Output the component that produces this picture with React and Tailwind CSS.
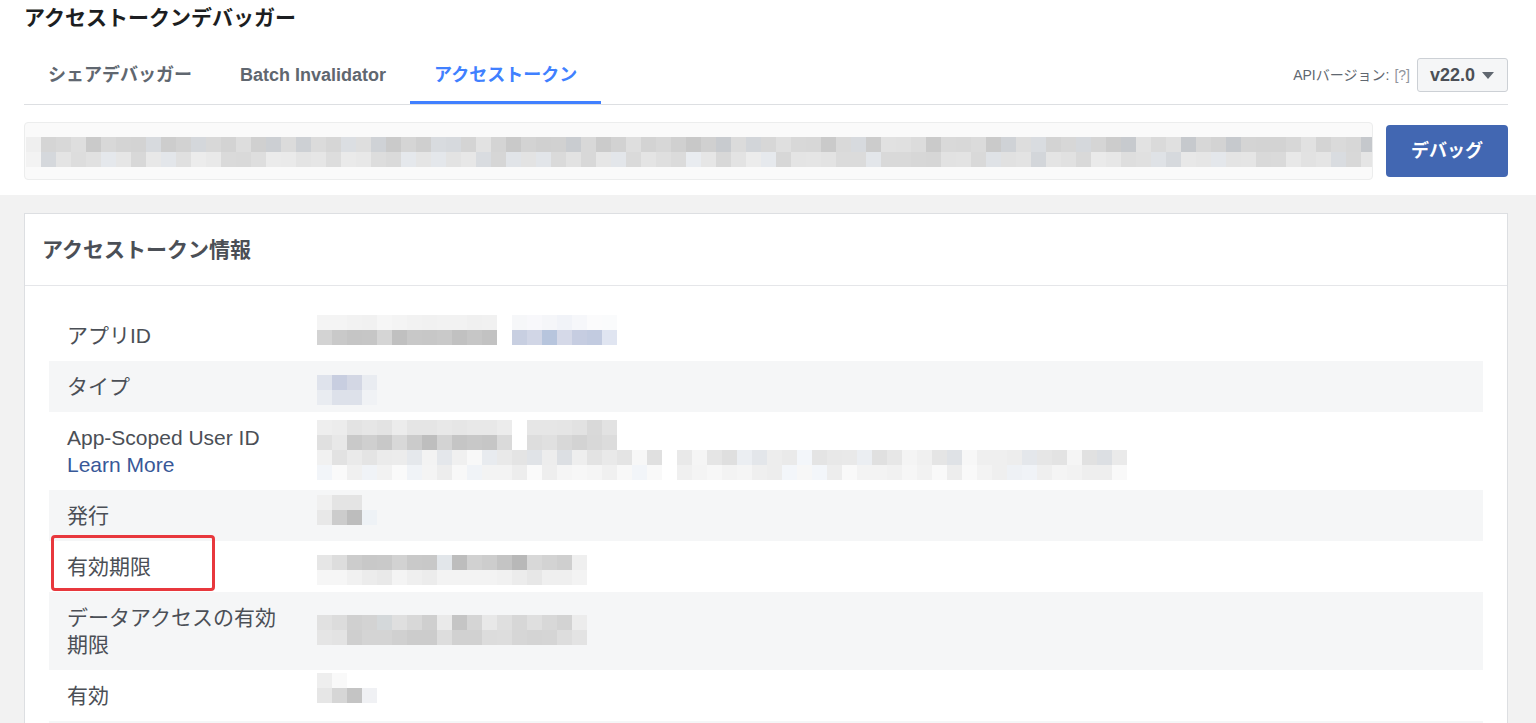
import React from "react";

function mulberry32(a) {
  return function () {
    a |= 0;
    a = (a + 0x6d2b79f5) | 0;
    let t = Math.imul(a ^ (a >>> 15), 1 | a);
    t = (t + Math.imul(t ^ (t >>> 7), 61 | t)) ^ t;
    return ((t ^ (t >>> 14)) >>> 0) / 4294967296;
  };
}

function toColor(c) {
  if (!c || c === ".") return null;
  if (c.length === 2) return `#${c}${c}${c}`;
  return `#${c}`;
}

function hex2(n) {
  const v = Math.max(0, Math.min(255, Math.round(n)));
  return v.toString(16).padStart(2, "0");
}

function randRow(seed, n, lo, hi, gaps = []) {
  const r = mulberry32(seed);
  const out = [];
  for (let i = 0; i < n; i++) {
    if (gaps.includes(i)) {
      out.push(".");
      continue;
    }
    const v = lo + (hi - lo) * r();
    const tint = r();
    if (tint < 0.2) {
      out.push(hex2(v - 3) + hex2(v) + hex2(v + 4));
    } else {
      out.push(hex2(v));
    }
  }
  return out;
}

function Mosaic({ rows, cell = 15 }) {
  const cols = Math.max(...rows.map((r) => r.length));
  const w = cols * cell;
  const h = rows.length * cell;
  return (
    <svg width={w} height={h} className="block" shapeRendering="crispEdges">
      {rows.map((r, y) =>
        r.map((c, x) => {
          const fill = toColor(c);
          return fill ? (
            <rect key={`${y}-${x}`} x={x * cell} y={y * cell} width={cell} height={cell} fill={fill} />
          ) : null;
        })
      )}
    </svg>
  );
}

const tokenTop = ["efefef", ...randRow(11, 89, 0xc8, 0xe2)];
const tokenBottom = ["f3f3f3", ...randRow(23, 89, 0xd6, 0xec)];

const appIdRows = [
  "f4 f4 f2 f1 f6 f4 f2 f1 f2 f2 f0 f1 . f6f7f9 f8f8fb f5f6f9 f1f3f8 f6f7fa fbfbfc fafbfc".split(" "),
  "d3 c9 c5 c6 d5 c0 c8 c7 c9 c1 c6 c2 . c8cfe1 d1d6e6 b7c5dd d5d9e8 c6cde1 c2cbe0 e0e5f1".split(" "),
];

const typeRows = [
  "dfe3ec c8cee0 d3d7e4 e9ecf1".split(" "),
  "e9ecf1 dde1ea dde1ea f0f2f5".split(" "),
];

const appScopedRows = [
  "ee ec e3 e6 e3 ec e5 e5 e8 e6 e8 e8 ec . e6 e6 e5 e2 d9 e2".split(" "),
  "e0 e8 c9 cf c8 d8 cb be d3 c5 c8 c6 da . dd e0 d8 d3 d8 dc".split(" "),
  randRow(57, 54, 0xde, 0xf8, [23]),
  randRow(91, 54, 0xec, 0xfa, [23]),
];

const issuedRows = ["f0 e4 e4".split(" "), "e8 cc bd eef2f6".split(" ")];

const expiresRows = [
  "e6 dd cc c8 c9 d2 c9 c8 e2e6ea bd d1 cd c4 b8 d8 d3 cf ef".split(" "),
  "f6 f6 f1 ec e9 f4 ef ec f3 f3 f3 f3 f1 ec e7 ef ef f3".split(" "),
];

const dataExpiresRows = [
  "e1 dc d0 d3 d4d8da df d8 cf ea c5 d5 e8 df d7 df d8 d3 ec".split(" "),
  "e5 e3 cf d4 d4 d0 cc cc dd d1 d1 dc dd d6 d4 d5 dd e3".split(" "),
];

const validRows = ["ee f9".split(" "), "e6 d6 c4 f0f1f4".split(" ")];

const originRows = ["f2 ee e9".split(" "), "d8 cf d5 e4".split(" ")];

function Row({ gray, label, valuePt, rows, highlight }) {
  return (
    <div className={`flex ${gray ? "bg-[#f5f6f7]" : "bg-white"}`}>
      <div className="relative w-[253px] shrink-0 py-[12px] pl-[18px] pr-[18px] text-[21px] leading-[27px] text-[#4b4f56]">
        {label}
        {highlight && (
          <div className="absolute left-[2px] top-[-6px] h-[56px] w-[164px] rounded-[4px] border-[3px] border-[#e8383d]" />
        )}
      </div>
      <div className={`flex-1 pl-[15px] ${valuePt}`}>
        <Mosaic rows={rows} />
      </div>
    </div>
  );
}

export default function App() {
  return (
    <div className="min-h-screen bg-[#f2f2f2] font-[family-name:'Liberation_Sans','Noto_Sans_CJK_JP',Arial,sans-serif]">
      {/* top white section */}
      <div className="bg-white pb-[15px] pl-6 pr-[28px]">
        <div className="flex h-[36px] items-center text-[21px] font-bold text-[#1c1e21]">
          アクセストークンデバッガー
        </div>

        <div className="mt-[10px] flex items-center justify-between border-b border-[#dddfe2]">
          <div className="flex">
            <div className="flex h-[58px] items-center border-b-[3px] border-transparent px-6 pt-[3px] text-[18px] font-bold text-[#606770]">
              シェアデバッガー
            </div>
            <div className="flex h-[58px] items-center border-b-[3px] border-transparent px-6 pt-[3px] text-[18px] font-bold text-[#606770]">
              Batch Invalidator
            </div>
            <div className="flex h-[58px] items-center border-b-[3px] border-[#4080ff] px-6 pt-[3px] text-[18px] font-bold text-[#4080ff]">
              アクセストークン
            </div>
          </div>
          <div className="flex items-center">
            <span className="text-[14px] text-[#606770]">APIバージョン:</span>
            <span className="ml-[5px] text-[14px] text-[#90949c]">[?]</span>
            <div className="ml-[7px] flex h-[34px] items-center rounded-[3px] border border-[#ccd0d5] bg-[#f5f6f7] pl-[12px] pr-[13px]">
              <span className="text-[18px] font-bold text-[#4b4f56]">v22.0</span>
              <svg width="12" height="7" viewBox="0 0 12 7" className="ml-[7px]">
                <polygon points="0,0 12,0 6,7" fill="#606770" />
              </svg>
            </div>
          </div>
        </div>

        <div className="mt-[17px] flex items-center gap-[13px]">
          <div className="h-[58px] flex-1 overflow-hidden rounded-[4px] border border-[#eceded] bg-[#fafafa] pl-[1px] pt-[14px]">
            <Mosaic rows={[tokenTop, tokenBottom]} />
          </div>
          <button className="flex h-[52px] w-[122px] items-center justify-center rounded-[4px] bg-[#4267b2] text-[18px] font-bold text-white">
            デバッグ
          </button>
        </div>
      </div>

      {/* gray section with card */}
      <div className="pl-6 pr-[28px] pt-[18px]">
        <div className="border border-[#dddfe2] bg-white">
          <div className="flex h-[72px] items-center border-b border-[#e5e6e9] pl-[17px] text-[21px] font-bold text-[#4b4f56]">
            アクセストークン情報
          </div>
          <div className="px-6 pb-6 pt-[24px]">
            <Row label="アプリID" valuePt="pt-[5px]" rows={appIdRows} />
            <Row gray label="タイプ" valuePt="pt-[14px]" rows={typeRows} />
            <Row
              label={
                <>
                  <div>App-Scoped User ID</div>
                  <div className="text-[#385898]">Learn More</div>
                </>
              }
              valuePt="pt-[8px]"
              rows={appScopedRows}
            />
            <Row gray label="発行" valuePt="pt-[5px]" rows={issuedRows} />
            <Row highlight label="有効期限" valuePt="pt-[14px]" rows={expiresRows} />
            <Row gray label="データアクセスの有効期限" valuePt="pt-[23px]" rows={dataExpiresRows} />
            <Row label="有効" valuePt="pt-[3px]" rows={validRows} />
            <Row gray label="" valuePt="pt-[8px]" rows={originRows} />
            <Row label="" valuePt="pt-[8px]" rows={typeRows} />
          </div>
        </div>
      </div>
    </div>
  );
}
